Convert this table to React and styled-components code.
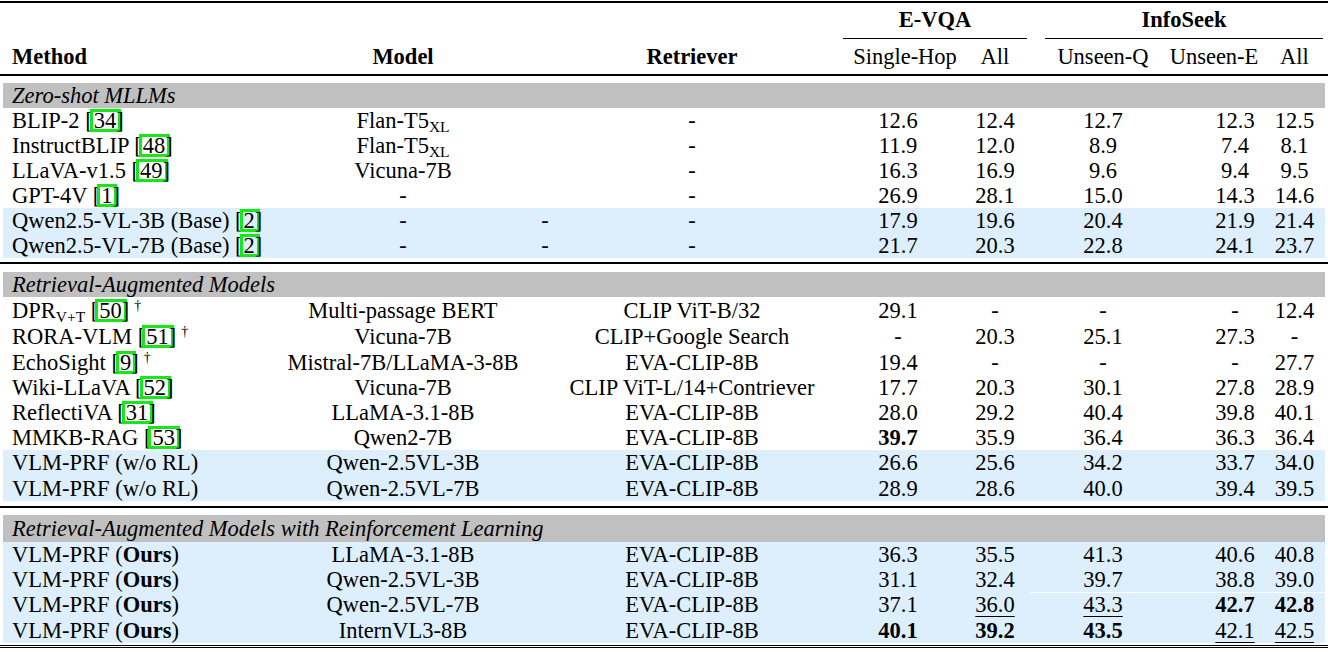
import React from "react";
import styled, { createGlobalStyle } from "styled-components";

const GlobalStyle = createGlobalStyle`
  body {
    margin: 0;
    background: #fff;
    color: #000;
    font-family: "Liberation Serif", "Times New Roman", serif;
  }
`;

// column widths (x): method | model | extra | retriever | single-hop | all | unseen-q | unseen-e | all
const COLS = "287px 226px 58px 236px 150px 70px 146px 76px 73px";
const HEAD_PAD = [9, 0, 0, 0, 40, 0, 0, 0, 12];
const DATA_PAD = [9, 0, 0, 0, 26, 0, 0, 42, 12];

const Table = styled.div`
  width: 1328px;
  padding-top: 1px;
  font-size: 22.5px;
  line-height: 25px;
`;

const Rule = styled.div`
  height: ${(p) => p.$h || 2}px;
  margin-top: ${(p) => p.$mt || 0}px;
  margin-bottom: ${(p) => p.$mb || 0}px;
  background: ${(p) => (p.$double ? "transparent" : "#000")};
  border-top: ${(p) => (p.$double ? "1px solid #000" : "none")};
  border-bottom: ${(p) => (p.$double ? "1px solid #000" : "none")};
  box-sizing: border-box;
`;

const Row = styled.div`
  display: grid;
  grid-template-columns: ${COLS};
  height: ${(p) => p.$h}px;
  border-left: 3px solid transparent;
  border-right: 3px solid transparent;
  background-clip: padding-box;
  background-color: ${(p) =>
    p.$tone === "band" ? "#c0c0c0" : p.$tone === "blue" ? "#ddeffc" : "transparent"};
`;

const Cell = styled.div`
  display: flex;
  align-items: center;
  justify-content: ${(p) => (p.$left ? "flex-start" : "center")};
  padding-left: ${(p) => p.$pl || 0}px;
  white-space: nowrap;
  font-weight: ${(p) => (p.$bold ? 700 : 400)};
  box-shadow: ${(p) => (p.$cut ? "inset 0 1px 0 #fff" : "none")};
`;

const Text = styled.span`
  display: block;
  white-space: pre;
`;

const BandTitle = styled.div`
  grid-column: 1 / -1;
  display: flex;
  align-items: center;
  padding-left: 9px;
  font-style: italic;
  white-space: nowrap;
`;

const GroupCell = styled.div`
  grid-column: ${(p) => p.$col} / span ${(p) => p.$span};
  display: flex;
  align-items: flex-end;
`;

const GroupLabel = styled.div`
  flex: 1;
  margin: 0 ${(p) => p.$mr}px 0 ${(p) => p.$ml}px;
  padding-bottom: 6px;
  border-bottom: 1px solid #000;
  text-align: center;
  font-weight: 700;
`;

const Cite = styled.span`
  display: inline-block;
  border: 3px solid #16e816;
  line-height: 17px;
  padding: 0 2px 0 1px;
  margin: 0 -5px 0 -3px;
`;

const Sub = styled.span`
  font-size: 15.5px;
  vertical-align: -4px;
  line-height: 0;
`;

const Dagger = styled.span`
  color: #000;
  font-size: 14px;
  vertical-align: 8px;
  line-height: 0;
  margin-left: 5px;
`;

const Num = styled.span`
  font-weight: ${(p) => (p.$bold ? 700 : 400)};
  text-decoration: ${(p) => (p.$under ? "underline" : "none")};
  text-decoration-thickness: 1px;
  text-underline-offset: 4px;
`;

const Ref = ({ n, dag }) => (
  <>
    {" "}[<Cite>{n}</Cite>]{dag && <Dagger>†</Dagger>}
  </>
);

const Ours = () => (
  <>
    VLM-PRF (<b>Ours</b>)
  </>
);

const flan = (
  <>
    Flan-T5<Sub>XL</Sub>
  </>
);

const sections = [
  {
    title: "Zero-shot MLLMs",
    band: 25,
    rows: [
      { m: <>BLIP-2<Ref n="34" /></>, model: flan, x: "", r: "-", v: ["12.6", "12.4", "12.7", "12.3", "12.5"] },
      { m: <>InstructBLIP<Ref n="48" /></>, model: flan, x: "", r: "-", v: ["11.9", "12.0", "8.9", "7.4", "8.1"] },
      { m: <>LLaVA-v1.5<Ref n="49" /></>, model: "Vicuna-7B", x: "", r: "-", v: ["16.3", "16.9", "9.6", "9.4", "9.5"] },
      { m: <>GPT-4V<Ref n="1" /></>, model: "-", x: "", r: "-", v: ["26.9", "28.1", "15.0", "14.3", "14.6"] },
      { m: <>Qwen2.5-VL-3B (Base)<Ref n="2" /></>, model: "-", x: "-", r: "-", v: ["17.9", "19.6", "20.4", "21.9", "21.4"], blue: true },
      { m: <>Qwen2.5-VL-7B (Base)<Ref n="2" /></>, model: "-", x: "-", r: "-", v: ["21.7", "20.3", "22.8", "24.1", "23.7"], blue: true },
    ],
  },
  {
    title: "Retrieval-Augmented Models",
    band: 25,
    rows: [
      { m: <>DPR<Sub>V+T</Sub><Ref n="50" dag /></>, model: "Multi-passage BERT", x: "", r: "CLIP ViT-B/32", v: ["29.1", "-", "-", "-", "12.4"], h: 26 },
      { m: <>RORA-VLM<Ref n="51" dag /></>, model: "Vicuna-7B", x: "", r: "CLIP+Google Search", v: ["-", "20.3", "25.1", "27.3", "-"], h: 26 },
      { m: <>EchoSight<Ref n="9" dag /></>, model: "Mistral-7B/LLaMA-3-8B", x: "", r: "EVA-CLIP-8B", v: ["19.4", "-", "-", "-", "27.7"], h: 26 },
      { m: <>Wiki-LLaVA<Ref n="52" /></>, model: "Vicuna-7B", x: "", r: "CLIP ViT-L/14+Contriever", v: ["17.7", "20.3", "30.1", "27.8", "28.9"] },
      { m: <>ReflectiVA<Ref n="31" /></>, model: "LLaMA-3.1-8B", x: "", r: "EVA-CLIP-8B", v: ["28.0", "29.2", "40.4", "39.8", "40.1"] },
      { m: <>MMKB-RAG<Ref n="53" /></>, model: "Qwen2-7B", x: "", r: "EVA-CLIP-8B", v: ["*39.7", "35.9", "36.4", "36.3", "36.4"] },
      { m: "VLM-PRF (w/o RL)", model: "Qwen-2.5VL-3B", x: "", r: "EVA-CLIP-8B", v: ["26.6", "25.6", "34.2", "33.7", "34.0"], blue: true, h: 25.5 },
      { m: "VLM-PRF (w/o RL)", model: "Qwen-2.5VL-7B", x: "", r: "EVA-CLIP-8B", v: ["28.9", "28.6", "40.0", "39.4", "39.5"], blue: true, h: 25.5 },
    ],
  },
  {
    title: "Retrieval-Augmented Models with Reinforcement Learning",
    band: 27,
    rows: [
      { m: <Ours />, model: "LLaMA-3.1-8B", x: "", r: "EVA-CLIP-8B", v: ["36.3", "35.5", "41.3", "40.6", "40.8"], blue: true },
      { m: <Ours />, model: "Qwen-2.5VL-3B", x: "", r: "EVA-CLIP-8B", v: ["31.1", "32.4", "39.7", "38.8", "39.0"], blue: true },
      { m: <Ours />, model: "Qwen-2.5VL-7B", x: "", r: "EVA-CLIP-8B", v: ["37.1", "_36.0", "_43.3", "*42.7", "*42.8"], blue: true, h: 25.5, cut: true },
      { m: <Ours />, model: "InternVL3-8B", x: "", r: "EVA-CLIP-8B", v: ["*40.1", "*39.2", "*43.5", "_42.1", "_42.5"], blue: true, h: 25.5 },
    ],
  },
];

const Value = ({ s }) => {
  const bold = s.startsWith("*");
  const under = s.startsWith("_");
  return (
    <Num $bold={bold} $under={under}>
      {bold || under ? s.slice(1) : s}
    </Num>
  );
};

const DataRow = ({ row }) => {
  const cells = [row.m, row.model, row.x, row.r];
  return (
    <Row $h={row.h || 25} $tone={row.blue ? "blue" : undefined}>
      {cells.map((c, i) => (
        <Cell key={i} $left={i === 0} $pl={DATA_PAD[i]}>
          <Text>{c}</Text>
        </Cell>
      ))}
      {row.v.map((s, i) => (
        <Cell key={"v" + i} $pl={DATA_PAD[i + 4]} $cut={row.cut && i >= 2}>
          <Text>
            <Value s={s} />
          </Text>
        </Cell>
      ))}
    </Row>
  );
};

const headers = ["Method", "Model", "", "Retriever", "Single-Hop", "All", "Unseen-Q", "Unseen-E", "All"];

export default function App() {
  return (
    <>
      <GlobalStyle />
      <Table>
        <Rule $h={2} />
        <Row $h={36}>
          <GroupCell $col={5} $span={2}>
            <GroupLabel $ml={33} $mr={3}>E-VQA</GroupLabel>
          </GroupCell>
          <GroupCell $col={7} $span={3}>
            <GroupLabel $ml={15} $mr={2}>InfoSeek</GroupLabel>
          </GroupCell>
        </Row>
        <Row $h={35}>
          {headers.map((h, i) => (
            <Cell key={i} $left={i === 0} $pl={HEAD_PAD[i]} $bold={i < 4}>
              <Text>{h}</Text>
            </Cell>
          ))}
        </Row>
        <Rule $h={2} $mb={7} />
        {sections.map((sec, si) => (
          <React.Fragment key={si}>
            {si > 0 && <Rule $h={2} $mt={si === 1 ? 4 : 5} $mb={si === 1 ? 8 : 7} />}
            <Row $h={sec.band} $tone="band">
              <BandTitle>{sec.title}</BandTitle>
            </Row>
            {sec.rows.map((r, ri) => (
              <DataRow key={ri} row={r} />
            ))}
          </React.Fragment>
        ))}
        <Rule $h={3} $mt={2} $double />
      </Table>
    </>
  );
}
